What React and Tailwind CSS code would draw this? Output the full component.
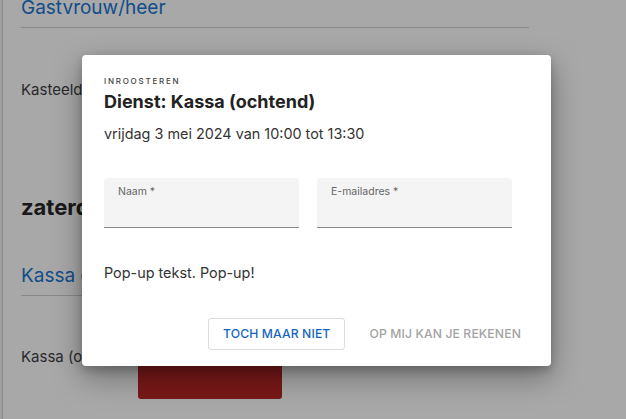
export default function App() {
  return (
    <div
      className="relative h-[419px] w-[626px] overflow-hidden bg-white"
      style={{ fontFamily: 'Inter, "Noto Sans", sans-serif' }}
    >
      {/* page behind the dialog */}
      <div className="flex h-full">
        <div className="w-[3px] shrink-0 border-r border-[#d4d4d4] bg-[#f2f2f2]" />
        <div className="flex-1 pl-[18px]">
          <div className="-mt-[5px] w-[508px] border-b border-[#d0d0d0] pb-[6px] text-[19px] leading-[26px] text-[#1976d2]">
            Gastvrouw/heer
          </div>
          <div className="mt-[52px] text-[15px] leading-[20px] text-[#3f3f46]">Kasteeldienst</div>
          <div className="mt-[93px] text-[22px] font-bold leading-[28px] text-[#27272a]">zaterdag</div>
          <div className="mt-[42px] w-[508px] border-b border-[#d0d0d0] pb-[6px] text-[19px] leading-[26px] text-[#1976d2]">
            Kassa en
          </div>
          <div className="mt-[51px] flex">
            <div className="w-[117px] text-[15px] leading-[20px] text-[#3f3f46]">Kassa (oc</div>
          </div>
          <div className="ml-[117px] mt-[-4px] h-[36px] w-[144px] rounded-[3px] bg-[#b82525]" />
        </div>
      </div>

      {/* overlay */}
      <div className="absolute inset-0 bg-black/[0.34]" />

      {/* dialog */}
      <div className="absolute inset-0 flex items-start justify-center pl-[7px] pt-[55px]">
        <div className="w-[469px] rounded-[4px] bg-white pb-[16px] pl-[22px] pr-[15px] pt-[20px] shadow-[0_11px_30px_rgba(0,0,0,0.35),0_4px_10px_rgba(0,0,0,0.2)]">
          <div className="text-[8px] font-medium uppercase leading-[12px] tracking-[0.22em] text-[#444]">Inroosteren</div>
          <div className="mt-[3px] text-[18px] font-bold leading-[24px] text-[#222]">Dienst: Kassa (ochtend)</div>
          <div className="mt-[10px] text-[14.4px] leading-[20px] text-[#333]">vrijdag 3 mei 2024 van 10:00 tot 13:30</div>

          <div className="mt-[34px] flex gap-[18px]">
            <div className="h-[50px] w-[195px] rounded-t-[4px] border-b border-[#8a8a8a] bg-[#f4f4f4] px-[14px] pt-[7px] text-[10.5px] leading-[14px] text-[#666]">
              Naam *
            </div>
            <div className="h-[50px] w-[195px] rounded-t-[4px] border-b border-[#8a8a8a] bg-[#f4f4f4] px-[14px] pt-[7px] text-[10.5px] leading-[14px] text-[#666]">
              E-mailadres *
            </div>
          </div>

          <div className="mt-[35px] text-[14.4px] leading-[20px] text-[#333]">Pop-up tekst. Pop-up!</div>

          <div className="mt-[35px] flex justify-end gap-[9px]">
            <button className="h-[32px] rounded-[3px] border border-[#dcdcdc] px-[14px] text-[12.2px] font-medium tracking-[0.01em] text-[#1565c0]">
              TOCH MAAR NIET
            </button>
            <button className="h-[32px] px-[15px] text-[12.2px] font-medium tracking-[0.01em] text-[#a3a3a3]">
              OP MIJ KAN JE REKENEN
            </button>
          </div>
        </div>
      </div>
    </div>
  )
}
